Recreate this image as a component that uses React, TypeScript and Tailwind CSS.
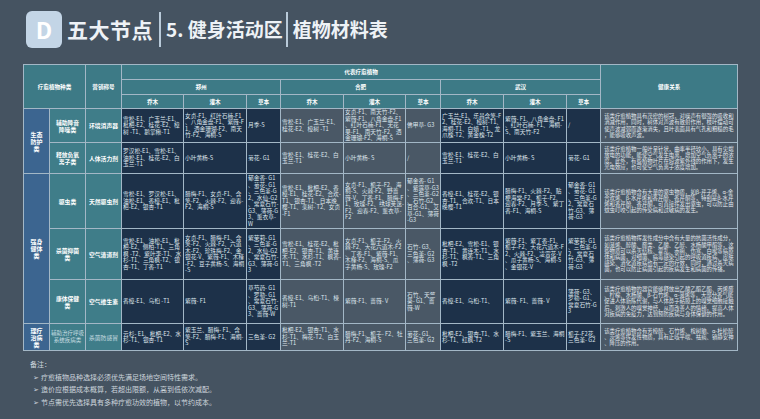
const font = { fontFamily: '"Noto Sans CJK SC", "Noto Sans", "DejaVu Sans", sans-serif' }

type Row = {
  group?: { label: string; span: number }
  kind: string
  name: string
  cells: string[]
  health: string
  h: string
  faint?: boolean
}

const rows: Row[] = [
  {
    group: { label: '生态防护类', span: 2 },
    kind: '辅助降音降噪类',
    name: '环境消声器',
    h: 'h-[34px]',
    cells: [
      '雪松-E1、广玉兰-E1、枇杷-E2、桂花-E2、樟树 -T1、鹅掌楸-T1',
      '女贞-F1、红叶石楠-F1、八角金盘-F1、紫薇-F1、洒金珊瑚-F2、南天竹-F2、海桐-S',
      '月季-S',
      '雪松-E1、广玉兰-E1、桂花-E2、樟树 -T1',
      '女贞-F1、南天竹-F2、紫薇-F1、八角金盘-F1、红叶石楠-F1、无花果-F1、南天竹-F2、洒金珊瑚-F2、海桐-S',
      '佛甲草- G3',
      '广玉兰-E1、乐昌含笑-F2、桂花-E2、樟树-T1、海桐-T1、白蜡 -T1、龙爪槐-T2、黄金槐-T2',
      '紫薇- F1、八角金盘- F1、红叶石楠- F1、海桐-S、南天竹-F2',
      '/',
    ],
    health:
      '该类疗愈植物具有茂密的树冠，对噪声有很强的吸收和消减作用，同时，树体对声波有散射作用，枝叶摆动可使声波减弱而逐渐消失，且叶表面具有气孔和粗糙的毛，能够吸收声波。',
  },
  {
    kind: '释放负氧离子类',
    name: '人体活力剂',
    h: 'h-[31px]',
    cells: [
      '罗汉松-E1、雪松-E1、油松-E1、桂花-E2、白玉兰-T1',
      '小叶黄杨-S',
      '菊花- G1',
      '雪松-E1、桂花-E2、白玉兰-T1',
      '小叶黄杨- S',
      '/',
      '雪松-E1、桂花-E2、白玉兰-T1',
      '小叶黄杨- S',
      '菊花- G1',
    ],
    health:
      '该类疗愈植物一般叶呈针状，曲率半径较小，具有尖端放电的功能，能使空气发生电离，增加空气负离子的浓度。此外，有些植物叶片在短波紫外线的作用下，发生光电效应，也可使空气负离子浓度增加。',
  },
  {
    group: { label: '强身健体类', span: 3 },
    kind: '驱虫类',
    name: '天然驱虫剂',
    h: 'h-[55px]',
    cells: [
      '雪松-E1、罗汉松-E1、油松-E1、香樟-E1、枇杷-E2、银杏-T1',
      '腊梅-F1、女贞-F1、含笑-F2、火棘-F2、迎春-F2、海桐-S',
      '郁金香- G1、菊花- G1、三色堇-G2、水仙-G2、常夏石竹-G3、薄荷-G3、薰衣草-W',
      '雪松-E1、枇杷-E2、香樟-E1、桂花-E2、合欢-T1、银杏-T1、日本晚樱-T1、栾树- T2、女贞-F1',
      '女贞-F1、栀子-F2、海桐-S、火棘-F2、野蔷薇-V、丁香-F1、腊梅-F1、玫瑰-F2、绣球荚蒾-F2、迎春-F2、薰衣草-F2',
      '郁金香- G1、紫露草-G3、三色堇-G2、石竹-G2、百合-G1、艾草-G1、薄荷-G3',
      '香樟-E1、桂花-E2、银杏-T1、合欢-T1、日本晚樱-T1',
      '腊梅-F1、火棘-F2、贴梗海棠-F2、栀子-F2、迎春-F2、月季-S、紫丁香-F1、海桐-S',
      '郁金香- G1、菊花- G1、三色堇-G2、常夏石竹-G3、薄荷-G3',
    ],
    health:
      '该类疗愈植物含有大量的驱虫物质，如β-芹子烯、α-金合欢烯、β-水芹烯和香芹酚、香芹酮等，特别是β-水芹烯和香芹酚、香芹酮，可直接挥发出驱虫，可以防止由蚊虫叮咬引起的传染病和过敏病的发生。',
  },
  {
    kind: '杀菌抑菌类',
    name: '空气清道剂',
    h: 'h-[51px]',
    cells: [
      '雪松-E1、油松-E1、枇杷-E2、侧柏-T1、三角枫 -T2、紫叶李-T1、水杉-T1、三角枫-T2、银杏-T1、丁香-T1',
      '女贞-F1、腊梅-F1、含笑-F2、火棘-F2、六道木-F2、珍珠梅-F2、金银花-V、紫薇-F1、木槿-F2、豆子黄杨-S、海桐-S',
      '紫茉莉- G1、三色堇-G2、水仙-G2、常夏石竹-G3、薄荷-G3',
      '雪松-E1、桂花-E2、枇杷-E2、银杏-T1、黄连木-T1、水杉-T1、枫香-T1、三角枫 -T2',
      '女贞-F1、栀子-F2、火棘-F2、大花六道木-F2、丁香-F1、紫薇-F1、木槿-F2、海桐-S、瓜子黄杨-S、玫瑰-F2',
      '石竹- G3、三色堇- G2、薄荷- G3',
      '枇杷-E2、雪松-E1、银杏-T1、黄连木-T1、水杉-T1、枫香-T1、三角枫 -T2',
      '紫薇-F1、紫丁香-F1、栀子-F2、大花六道木-F2、火棘-F2、凌霄花-V、瓜子黄杨-S、海桐-S、金银花-V',
      '紫茉莉- G1、三色堇-G2、常夏石竹-G3、薄荷-G3',
    ],
    health:
      '该类疗愈植物挥发性成分中含有大量的抗菌活性成分，如蒎烯、醇酸、醛类、乙酸、乙醇、水杨酸甲酯等，这些物质可以杀灭结核、霍乱、赤痢、伤寒、白喉等病原体和病菌，对细菌、病毒感染引起的呼吸道疾病、皮肤感染、消化道疾病也有一定的疗效，同时，通过杀灭病菌，也可以防止病菌引起的疾病发生和病菌的传播。',
  },
  {
    kind: '康体保健类',
    name: '空气维生素',
    h: 'h-[44px]',
    cells: [
      '香樟-E1、乌桕 -T1',
      '紫薇- F1',
      '草芍药- G1、罗勒- G1、常夏石竹-G3、薄荷-G3、蔷薇-W',
      '香樟-E1、乌桕-T1、楝树-T1',
      '紫薇-F1、蔷薇- V',
      '石竹、天竺葵- G1、蔷薇-W',
      '香樟-E1、乌桕-T1、',
      '紫薇- F1、蔷薇- V',
      '薄荷- G3、罗勒- G1、常夏石竹-G3',
    ],
    health:
      '该类疗愈植物的器官能够释放出乙酸乙酯乙酯、丙烯醛、柠檬、水杨酸、β-石竹烯、α-蒎烯等，大部分香气能促进人体新陈代谢，与人体鼻子粘膜上的嗅觉细胞接触后，刺激人的嗅觉神经，从而改善人的情绪，提高人体对疾病的免疫力，达到预防疾病与身体保健的作用。',
  },
  {
    group: { label: '理疗治病类', span: 1 },
    kind: '辅助治疗呼吸系统疾病类',
    name: '杀菌防感冒',
    faint: true,
    h: 'h-[27px]',
    cells: [
      '云杉- E1、枇杷-E2、水杉-T1、银杏-T1',
      '紫玉兰、腊梅- F1、含笑-F2、腊梅-F1、海桐-S',
      '三色堇- G2',
      '枇杷-E2、银杏-T1、水杉-T1、梅花-T2、白玉兰-T1',
      '腊梅-F1、栀子- F2、牡丹-F2、海桐-S',
      '菊花- G1、三色堇- G2',
      '枇杷-E2、银杏-T1、水杉-T1、红枫-T2',
      '腊梅-F1、紫玉兰、海桐-S',
      '栀子-F2花、三色堇- G2',
    ],
    health:
      '该类疗愈植物含有芳樟醇、石竹烯、桉树脑、α-杜松醇、茨烯等挥发性物质，具有止咳平喘、祛痰、镇静安神、降压的作用。',
  },
]

const widths = [26, 36, 36, 62, 63, 34, 63, 62, 35, 63, 63, 34, 137]
const cities = ['郑州', '合肥', '武汉']
const kinds = ['乔木', '灌木', '草本']

const th = 'border border-[#a3b7c6] bg-[#3d7a86] text-center align-middle font-bold text-white'

function App() {
  return (
    <div className="h-[419px] w-[760px] overflow-hidden bg-[#455361] text-[#dde5ec]" style={font}>
      {/* Title */}
      <div className="flex items-center pl-[26px] pt-[11px]">
        <div className="flex h-[37px] w-[36px] items-center justify-center rounded-[6px] bg-[#c3d5e6] text-[23px] font-bold text-white">
          D
        </div>
        <div className="ml-[5px] text-[21px] font-bold tracking-[0.5px] text-[#eef2f6]">五大节点</div>
        <div className="ml-[6px] mr-[5px] h-[35px] w-[2px] bg-[#b9cad9]" />
        <div className="text-[19px] font-bold text-[#eef2f6]">5. 健身活动区</div>
        <div className="ml-[3px] mr-[5px] h-[35px] w-[2px] bg-[#b9cad9]" />
        <div className="text-[19px] font-bold text-[#eef2f6]">植物材料表</div>
      </div>

      {/* Table */}
      <table className="ml-[23px] mt-[16px] w-[714px] table-fixed border-collapse">
        <colgroup>
          {widths.map((w, i) => (
            <col key={i} style={{ width: w }} />
          ))}
        </colgroup>
        <thead className="text-[5.6px] leading-[6px]">
          <tr className="h-[15px]">
            <th colSpan={2} rowSpan={3} className={th}>疗愈植物种类</th>
            <th rowSpan={3} className={th}>营销称号</th>
            <th colSpan={9} className={th}>代表疗愈植物</th>
            <th rowSpan={3} className={th}>健康关系</th>
          </tr>
          <tr className="h-[15px]">
            {cities.map((c) => (
              <th key={c} colSpan={3} className={th}>{c}</th>
            ))}
          </tr>
          <tr className="h-[14px]">
            {cities.map((c) =>
              kinds.map((k) => (
                <th key={c + k} className={th}>{k}</th>
              ))
            )}
          </tr>
        </thead>
        <tbody>
          {rows.map((r) => (
            <tr key={r.name} className={r.h}>
              {r.group && (
                <td
                  rowSpan={r.group.span}
                  className="border border-[#a3b7c6] bg-[#3c6590] px-[6px] text-center align-middle text-[6px] font-bold leading-[7px] text-white"
                >
                  {r.group.label}
                </td>
              )}
              <td
                className={`border border-[#a3b7c6] bg-[#3f7d89] text-center align-middle leading-[7px] ${
                  r.faint ? 'px-[1px] text-[5.5px] text-[#c9dde2]' : 'px-[4px] text-[5.8px] font-bold text-white'
                }`}
              >
                {r.kind}
              </td>
              <td
                className={`border border-[#a3b7c6] bg-[#3f7d89] px-[1px] text-center align-middle text-[5.8px] leading-[7px] ${
                  r.faint ? 'text-[#c9dde2]' : 'font-bold text-white'
                }`}
              >
                {r.name}
              </td>
              {r.cells.map((c, i) => (
                <td
                  key={i}
                  className={`border border-[#a3b7c6] px-[1px] align-middle text-[5.7px] leading-[6.5px] [line-break:anywhere] ${
                    i >= 3 && i < 6 ? 'bg-[#4a5866]' : 'bg-[#1d3149]'
                  }`}
                >
                  {c}
                </td>
              ))}
              <td className="border border-[#a3b7c6] bg-[#4a5866] px-[3px] align-middle text-[5.4px] leading-[6.2px] text-[#e2e8ee] [line-break:anywhere]">
                {r.health}
              </td>
            </tr>
          ))}
        </tbody>
      </table>

      {/* Notes */}
      <div className="ml-[30px] mt-[7px] text-[7px] leading-[12.5px] text-[#cdd5dd]">
        <div>备注：</div>
        {[
          '疗愈植物品种选择必须优先满足场地空间特性需求。',
          '造价应根据成本概算，若超出限额，从高到低依次减配。',
          '节点需优先选择具有多种疗愈功效的植物，以节约成本。',
        ].map((t) => (
          <div key={t} className="flex">
            <span className="ml-[3px] w-[8px]">➢</span>
            <span>{t}</span>
          </div>
        ))}
      </div>
    </div>
  )
}

export default App
